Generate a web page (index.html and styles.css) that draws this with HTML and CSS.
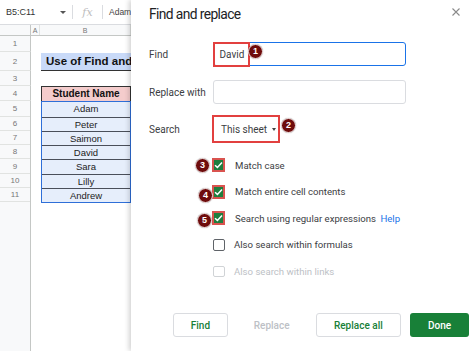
FILE: index.html
```html
<!DOCTYPE html>
<html>
<head>
<meta charset="utf-8">
<link rel="stylesheet" href="styles.css">
</head>
<body>
<div class="page">
  <div class="sheet">
    <div class="fbar">
      <span class="namebox">B5:C11</span>
      <span class="nb-arrow"></span>
      <span class="sep"></span>
      <span class="fx">fx</span>
      <span class="sep"></span>
      <span class="fval">Adam</span>
    </div>
    <div class="row colhead">
      <div class="rh"></div>
      <div class="ca">A</div>
      <div class="cb">B</div>
    </div>
    <div class="row r1"><div class="rh">1</div><div class="ca"></div><div class="cb"></div></div>
    <div class="row r2"><div class="rh">2</div><div class="ca"></div><div class="cb"><div class="title-cell">Use of Find and</div></div></div>
    <div class="row r3"><div class="rh">3</div><div class="ca"></div><div class="cb"></div></div>
    <div class="row r4"><div class="rh">4</div><div class="ca"></div><div class="cb"><div class="head-cell">Student Name</div></div></div>
    <div class="block">
      <div class="rhcol">
        <div class="rn first">5</div>
        <div class="rn">6</div>
        <div class="rn">7</div>
        <div class="rn">8</div>
        <div class="rn">9</div>
        <div class="rn">10</div>
        <div class="rn">11</div>
      </div>
      <div class="ca"></div>
      <div class="cb">
        <div class="range">
          <div class="nc first">Adam</div>
          <div class="nc">Peter</div>
          <div class="nc">Saimon</div>
          <div class="nc">David</div>
          <div class="nc">Sara</div>
          <div class="nc">Lilly</div>
          <div class="nc">Andrew</div>
        </div>
      </div>
    </div>
    <div class="row rest"><div class="rh"></div><div class="ca"></div><div class="cb"></div></div>
  </div>

  <div class="dialog">
    <div class="dhead">
      <span class="dtitle">Find and replace</span>
      <svg class="close" width="8" height="8" viewBox="0 0 8 8"><path d="M0.5 0.5 L7.5 7.5 M7.5 0.5 L0.5 7.5" stroke="#8a8a8a" stroke-width="1.1"/></svg>
    </div>
    <div class="frow find-row">
      <span class="lbl">Find</span>
      <div class="input active">
        <span class="hl-text">David</span>
        <span class="badge b1">1</span>
      </div>
    </div>
    <div class="frow replace-row">
      <span class="lbl">Replace with</span>
      <div class="input"></div>
    </div>
    <div class="frow search-row">
      <span class="lbl">Search</span>
      <div class="select">
        <span>This sheet</span>
        <span class="caret"></span>
        <span class="badge b2">2</span>
      </div>
    </div>
    <div class="checks">
      <div class="crow">
        <span class="cbox on"><svg width="9" height="8" viewBox="0 0 9 8"><path d="M1 4.2 L3.4 6.4 L8 1.4" fill="none" stroke="#fff" stroke-width="1.5"/></svg><span class="badge b3">3</span></span>
        <span class="clbl">Match case</span>
      </div>
      <div class="crow">
        <span class="cbox on"><svg width="9" height="8" viewBox="0 0 9 8"><path d="M1 4.2 L3.4 6.4 L8 1.4" fill="none" stroke="#fff" stroke-width="1.5"/></svg><span class="badge b4">4</span></span>
        <span class="clbl">Match entire cell contents</span>
      </div>
      <div class="crow">
        <span class="cbox on"><svg width="9" height="8" viewBox="0 0 9 8"><path d="M1 4.2 L3.4 6.4 L8 1.4" fill="none" stroke="#fff" stroke-width="1.5"/></svg><span class="badge b5">5</span></span>
        <span class="clbl">Search using regular expressions <span class="help">Help</span></span>
      </div>
      <div class="crow">
        <span class="cbox off"></span>
        <span class="clbl">Also search within formulas</span>
      </div>
      <div class="crow disabled">
        <span class="cbox dis"></span>
        <span class="clbl">Also search within links</span>
      </div>
    </div>
    <div class="buttons">
      <span class="btn out b-find">Find</span>
      <span class="btn ghost">Replace</span>
      <span class="btn out b-all">Replace all</span>
      <span class="btn done">Done</span>
    </div>
  </div>
</div>
</body>
</html>
```
FILE: styles.css
```css
* { box-sizing: border-box; }
html, body { margin: 0; padding: 0; background: #fff; }
body { width: 474px; height: 351px; overflow: hidden; font-family: "Liberation Sans", Arial, sans-serif; }
.page { position: relative; width: 474px; height: 351px; }

/* spreadsheet */
.sheet { width: 474px; height: 351px; display: flex; flex-direction: column; }
.fbar { height: 25px; flex: none; display: flex; align-items: center; border-bottom: 1px solid #dadce0; padding-left: 6px; font-size: 9px; color: #333; }
.namebox { width: 54px; }
.nb-arrow { width: 0; height: 0; border-left: 3px solid transparent; border-right: 3px solid transparent; border-top: 3px solid #555; margin-right: 6px; }
.sep { width: 1px; height: 14px; background: #dadce0; }
.fx { font-family: "DejaVu Serif", serif; font-style: italic; color: #bdbdbd; font-size: 11px; width: 29px; text-align: center; }
.fval { margin-left: 6px; font-size: 8.5px; color: #444; }

.row { display: flex; flex: none; }
.rh { width: 31px; flex: none; background: #f8f9fa; border-right: 1px solid #c4c7c5; border-bottom: 1px solid #e1e3e1; color: #777; font-size: 8px; display: flex; align-items: center; justify-content: center; }
.ca { width: 9px; flex: none; }
.cb { flex: 1; position: relative; }
.colhead { height: 11px; background: #f8f9fa; border-bottom: 1px solid #c4c7c5; }
.colhead .ca, .colhead .cb { font-size: 7px; color: #777; display: flex; align-items: center; justify-content: center; border-right: 1px solid #e1e3e1; }
.colhead .cb { width: 91px; flex: none; }
.colhead .rh { border-bottom: none; }
.r1 { height: 16px; }
.r2 { height: 19px; }
.r3 { height: 15px; }
.r4 { height: 15px; }
.title-cell { position: absolute; left: 1px; top: 1px; bottom: 0; width: 90px; overflow: hidden; background: #c9daf8; border-bottom: 1.5px solid #333; font-weight: bold; font-size: 11.5px; color: #111; padding-left: 5px; line-height: 17px; white-space: nowrap; }
.head-cell { margin-left: 1px; width: 90px; height: 15px; background: #f4cccc; border: 1px solid #333; border-bottom: none; font-weight: bold; font-size: 10px; color: #111; text-align: center; line-height: 14px; }

.block { display: flex; flex: none; }
.rhcol { width: 31px; flex: none; background: #f8f9fa; border-right: 1px solid #c4c7c5; }
.rn { height: 14.3px; border-bottom: 1px solid #e1e3e1; color: #777; font-size: 8px; display: flex; align-items: center; justify-content: center; }
.rn.first { height: 15.5px; }
.range { margin-left: 1px; width: 90px; border: 1px solid #2f6fd8; background: #e6eefb; }
.nc { height: 14.3px; border-top: 1px solid #4a4f5a; font-size: 9.5px; color: #222; text-align: center; line-height: 13px; }
.nc.first { height: 14.5px; border-top: none; }
.rest { flex: 1; }
.rest .rh { border-bottom: none; }

/* dialog */
.dialog { position: absolute; left: 131px; top: 0; width: 343px; height: 351px; background: #fff; box-shadow: -2px 0 5px rgba(0,0,0,0.18); padding: 0 5px 14px 18px; display: flex; flex-direction: column; font-family: Roboto, "Liberation Sans", sans-serif; color: #3c4043; }
.dhead { height: 26px; display: flex; align-items: center; justify-content: space-between; padding-right: 9px; }
.dtitle { font-size: 13.8px; color: #202124; padding-top: 1px; letter-spacing: -0.6px; }
.close { margin-top: -2px; }
.frow { display: flex; align-items: center; }
.lbl { width: 64px; font-size: 10px; color: #3c4043; }
.find-row { margin-top: 16px; height: 24px; }
.replace-row { margin-top: 14px; height: 24px; }
.search-row { margin-top: 11px; height: 28px; }
.input { width: 193px; height: 24px; border: 1px solid #dadce0; border-radius: 3px; position: relative; }
.input.active { border: 1.5px solid #1a73e8; }
.hl-text { position: absolute; left: -1.5px; top: -1.5px; width: 37px; height: 25px; border: 2px solid #e2403f; font-size: 10px; color: #3c4043; padding-left: 5px; line-height: 21px; }
.select { margin-left: -1px; width: 68px; height: 28px; border: 2px solid #e2403f; display: flex; align-items: center; padding-left: 7px; font-size: 10px; color: #3c4043; position: relative; }
.caret { margin-left: 5px; width: 0; height: 0; border-left: 2.5px solid transparent; border-right: 2.5px solid transparent; border-top: 3px solid #444; }
.badge { position: absolute; width: 15px; height: 15px; border-radius: 50%; background: #6e0c0c; border: 1px solid #f3e6e6; box-shadow: 0 0 1px rgba(0,0,0,0.4); color: #fff; font-family: "Liberation Sans", Arial, sans-serif; font-weight: bold; font-size: 9px; line-height: 13px; text-align: center; }
.b1 { left: 34px; top: 1px; }
.b2 { left: 67px; top: 1px; }

.checks { margin-top: 9px; display: flex; flex-direction: column; }
.crow { height: 26.5px; display: flex; align-items: center; padding-left: 63px; }
.cbox { width: 13px; height: 14px; flex: none; position: relative; display: flex; align-items: center; justify-content: center; }
.cbox.on { background: #1e7e3e; border: 2px solid #d9534f; }
.cbox.off { width: 11.5px; height: 11.5px; border: 1.5px solid #5f6368; border-radius: 2px; margin-left: 1px; }
.cbox.dis { width: 11.5px; height: 11.5px; border: 1.5px solid #d0d3d6; border-radius: 2px; margin-left: 1px; }
.clbl { margin-left: 10px; font-size: 9.6px; color: #3c4043; white-space: nowrap; }
.cbox.off + .clbl, .cbox.dis + .clbl { margin-left: 9.5px; }
.disabled .clbl { color: #bdc1c6; }
.help { color: #1a73e8; margin-left: 2px; }
.b3 { left: -19px; top: -2px; }
.b4 { left: -16px; top: 1px; }
.b5 { left: -17px; top: 0px; }

.buttons { margin-top: auto; display: flex; align-items: center; height: 24px; padding-left: 24px; }
.btn { height: 24px; display: flex; align-items: center; justify-content: center; font-size: 10px; font-weight: 500; border-radius: 3px; }
.btn.out { border: 1px solid #dadce0; color: #188038; background: #fff; }
.b-find { width: 55px; }
.ghost { width: 88px; color: #bdc1c6; }
.b-all { width: 86px; }
.done { width: 59px; margin-left: 9px; background: #188038; color: #fff; }
```
